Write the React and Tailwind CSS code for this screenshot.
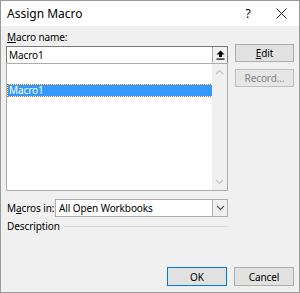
import React from "react";

const font = { fontFamily: '"Noto Sans", "Segoe UI", sans-serif' };

function UpArrow() {
  return (
    <svg width="9" height="10" viewBox="0 0 9 10">
      <path d="M4.5 0.5 L8.5 4.5 L6 4.5 L6 7 L3 7 L3 4.5 L0.5 4.5 Z" fill="#000" />
      <rect x="0.5" y="8.5" width="8" height="1.2" fill="#000" />
    </svg>
  );
}

function Chevron({ up, light }) {
  return (
    <svg width="9" height="6" viewBox="0 0 9 6">
      <path d={up ? "M1 5 L4.5 1.5 L8 5" : "M1 1 L4.5 4.5 L8 1"} fill="none" stroke={light ? "#c4c4c4" : "#555"} strokeWidth="1.2" />
    </svg>
  );
}

export default function App() {
  return (
    <div className="w-[300px] h-[293px] border border-[#9a9a9a] bg-[#f0f0f0] flex flex-col text-[10px] tracking-[-0.1px] text-black overflow-hidden whitespace-nowrap" style={font}>
      {/* Title bar */}
      <div className="h-[25px] bg-white flex items-center pl-[6px] shrink-0 text-[12px] tracking-normal">
        <span className="flex-1">Assign Macro</span>
        <span className="w-[14px] text-center mr-[21px]">?</span>
        <svg width="11" height="11" viewBox="0 0 11 11" className="mr-[12px]">
          <path d="M0.5 0.5 L10.5 10.5 M10.5 0.5 L0.5 10.5" stroke="#222" strokeWidth="1" />
        </svg>
      </div>

      <div className="flex flex-1 pl-[5px]">
        {/* Left column */}
        <div className="w-[222px] flex flex-col">
          <div className="h-[17px] mt-[3px] leading-[17px] pl-px"><u>M</u>acro name:</div>
          <div className="h-[18px] bg-white border border-[#7a7a7a] flex items-center">
            <span className="flex-1 pl-[2px] leading-none">Macro1</span>
            <div className="w-[15px] h-[16px] border-l border-[#adadad] bg-[#f0f0f0] flex items-center justify-center">
              <UpArrow />
            </div>
          </div>
          <div className="h-[128px] -mt-px bg-white border border-[#adadad] flex">
            <div className="flex-1 pt-[21px] pl-px">
              <div className="h-[11px] bg-[#3399ff] text-white leading-[11px] pl-[1px] outline-1 outline-dotted outline-[#a07830]">Macro1</div>
            </div>
            <div className="w-[15px] bg-[#f0f0f0] flex flex-col items-center justify-between py-[5px]">
              <Chevron up light />
              <Chevron light />
            </div>
          </div>

          <div className="flex items-center mt-[8px] h-[18px]">
            <span className="w-[49px] pl-px">M<u>a</u>cros in:</span>
            <div className="flex-1 h-[18px] bg-white border border-[#adadad] flex items-center">
              <span className="flex-1 pl-[3px] leading-none">All Open Workbooks</span>
              <div className="w-[15px] h-[16px] border-l border-[#adadad] bg-[#f0f0f0] flex items-center justify-center">
                <Chevron />
              </div>
            </div>
          </div>

          <div className="flex items-center mt-[1px] h-[17px] pl-px">
            <span>Description</span>
            <div className="flex-1 h-px bg-[#dcdcdc] ml-[4px]" />
          </div>
        </div>

        {/* Right column */}
        <div className="flex flex-col ml-[7px]">
          <div className="w-[59px] h-[18px] mt-[18px] border border-[#adadad] bg-[#e1e1e1] flex items-center justify-center leading-none"><u>E</u>dit</div>
          <div className="w-[59px] h-[18px] mt-[7px] border border-[#bfbfbf] bg-[#e6e6e6] text-[#838383] flex items-center justify-center leading-none">Record...</div>
        </div>
      </div>

      <div className="flex justify-end gap-[7px] pr-[5px] mb-[6px]">
        <div className="w-[60px] h-[19px] border border-[#0078d7] bg-[#e1e1e1] flex items-center justify-center leading-none">OK</div>
        <div className="w-[60px] h-[19px] border border-[#adadad] bg-[#e1e1e1] flex items-center justify-center leading-none">Cancel</div>
      </div>
    </div>
  );
}
